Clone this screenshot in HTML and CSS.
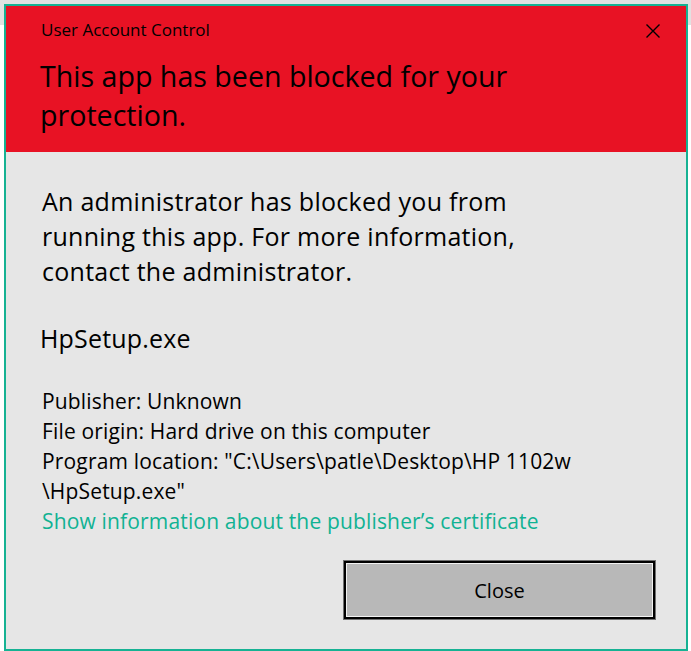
FILE: index.html
```html
<!DOCTYPE html>
<html lang="en">
<head>
<meta charset="utf-8">
<title>User Account Control</title>
<link rel="stylesheet" href="styles.css">
</head>
<body>
<div class="dialog">
  <header class="header">
    <div class="caption-row">
      <span class="caption">User Account Control</span>
      <span class="close-x" aria-label="Close">
        <svg width="16" height="16" viewBox="0 0 16 16"><path d="M1.5 1.5 L14.5 14.5 M14.5 1.5 L1.5 14.5" stroke="#000" stroke-width="1.4" fill="none"/></svg>
      </span>
    </div>
    <h1 class="title">This app has been blocked for your<br>protection.</h1>
  </header>
  <main class="body">
    <p class="message">An administrator has blocked you from<br>running this app. For more information,<br>contact the administrator.</p>
    <p class="filename">HpSetup.exe</p>
    <div class="details">
      <div>Publisher: Unknown</div>
      <div>File origin: Hard drive on this computer</div>
      <div>Program location: "C:\Users\patle\Desktop\HP 1102w</div>
      <div>\HpSetup.exe"</div>
      <a class="link" href="#">Show information about the publisher’s certificate</a>
    </div>
    <div class="actions">
      <button class="btn">Close</button>
    </div>
  </main>
</div>
</body>
</html>
```
FILE: styles.css
```css
html, body {
  margin: 0;
  padding: 0;
}
body {
  width: 691px;
  height: 651px;
  overflow: hidden;
  background: linear-gradient(#e1e1e1 0, #e1e1e1 25px, #ffffff 25px);
  padding: 4px 3px 0 4px;
  box-sizing: border-box;
  font-family: "Open Sans", "Noto Sans", sans-serif;
  color: #000;
}
.dialog {
  width: 684px;
  height: 647px;
  box-sizing: border-box;
  border: 2px solid #16b293;
  background: #e6e6e6;
  display: flex;
  flex-direction: column;
}
.header {
  background: #e81224;
  height: 146px;
  box-sizing: border-box;
  padding: 12px 0 0 35px;
}
.caption-row {
  display: flex;
  justify-content: space-between;
  align-items: flex-start;
  padding-right: 25px;
}
.caption {
  font-size: 17px;
  line-height: 24px;
}
.close-x {
  display: block;
  width: 16px;
  height: 16px;
  margin-top: 5px;
}
.close-x svg { display: block; }
.title {
  margin: 14px 0 0 -1px;
  font-weight: normal;
  font-size: 28.6px;
  line-height: 39px;
}
.body {
  padding: 32px 0 0 36px;
}
.message {
  margin: 0;
  font-size: 25px;
  letter-spacing: 0.27px;
  line-height: 35px;
}
.filename {
  margin: 32px 0 0 -2px;
  font-size: 25px;
  letter-spacing: 0.18px;
  line-height: 34px;
}
.details {
  margin-top: 31px;
  font-size: 21px;
  letter-spacing: 0.16px;
  line-height: 30px;
}
.link {
  display: block;
  color: #10b293;
  text-decoration: none;
}
.actions {
  display: flex;
  justify-content: flex-end;
  padding-right: 31px;
  margin-top: 25px;
}
.btn {
  width: 311px;
  height: 58px;
  box-sizing: border-box;
  border: 2px solid #000;
  outline: 1px solid #707070;
  outline-offset: 0;
  box-shadow: inset 0 0 0 1px #f2f2f2;
  background: #b8b8b8;
  font-family: "Open Sans", "Noto Sans", sans-serif;
  font-size: 20px;
  color: #000;
  padding: 0;
}
```
